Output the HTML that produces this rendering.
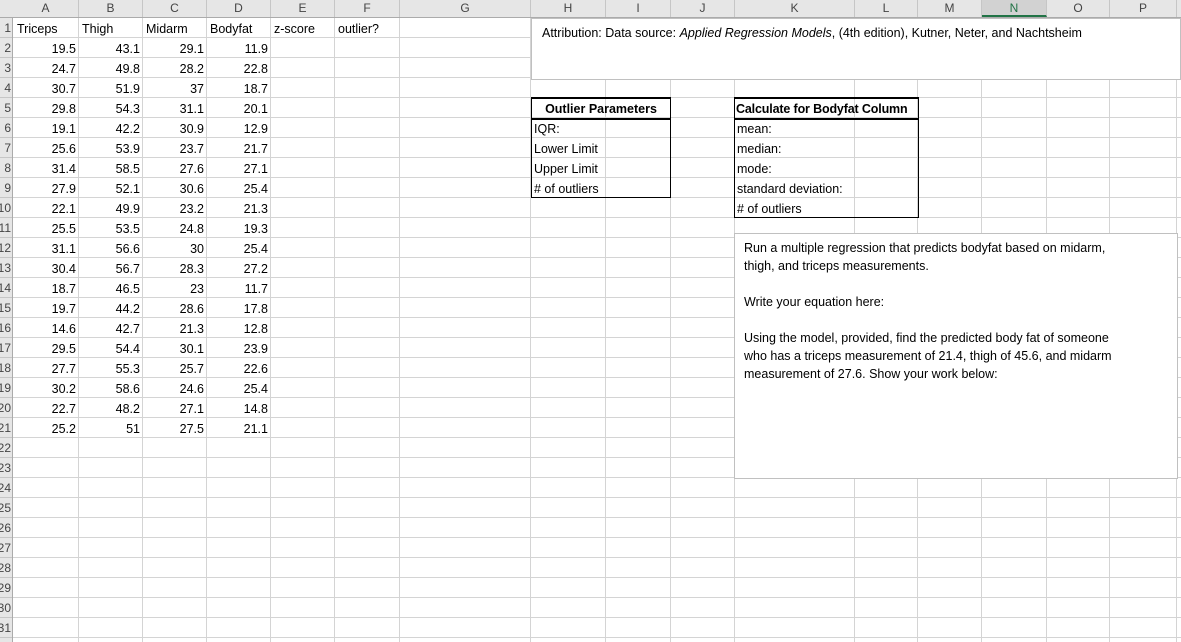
<!DOCTYPE html>
<html><head><meta charset="utf-8"><style>
*{margin:0;padding:0;box-sizing:border-box}
body{width:1181px;height:642px;overflow:hidden;background:#fff;font-family:"Liberation Sans",sans-serif;font-size:12.5px;color:#000;position:relative}
.grid{position:absolute;left:0;top:18px;width:1181px;height:624px;
background-image:repeating-linear-gradient(to bottom,transparent 0,transparent 19px,#d4d4d4 19px,#d4d4d4 20px);}
.v{position:absolute;top:0;width:1px;height:642px;background:#d4d4d4}
.hdr{position:absolute;left:0;top:0;width:1181px;height:18px;background:#e6e6e6;border-bottom:1px solid #ababab}
.hc{position:absolute;top:0;height:17px;line-height:17px;text-align:center;color:#444;font-size:12px;border-right:1px solid #c6c6c6}
.rn{position:absolute;left:0;top:18px;width:13px;height:624px;background:#e6e6e6;border-right:1px solid #ababab}
.rn div{height:20px;line-height:21px;font-size:12px;color:#444;text-align:right;padding-right:1px;border-bottom:1px solid #c6c6c6;overflow:hidden;white-space:nowrap;direction:rtl}
.row{position:absolute;left:13px;height:20px;line-height:20px;padding-top:1px;display:flex}
.row span{display:block;text-align:right;padding-right:3px;white-space:nowrap}
.row span:nth-child(1){width:66px}.row span:nth-child(2){width:64px}.row span:nth-child(3){width:64px}.row span:nth-child(4){width:64px}
.t{position:absolute;white-space:nowrap;line-height:20px;padding-top:1px}
.box{position:absolute;background:#fff;border:1px solid #c0c0c0}
</style></head><body>
<div class="grid"></div>
<div class="v" style="left:78px"></div><div class="v" style="left:142px"></div><div class="v" style="left:206px"></div><div class="v" style="left:270px"></div><div class="v" style="left:334px"></div><div class="v" style="left:399px"></div><div class="v" style="left:530px"></div><div class="v" style="left:605px"></div><div class="v" style="left:670px"></div><div class="v" style="left:734px"></div><div class="v" style="left:854px"></div><div class="v" style="left:917px"></div><div class="v" style="left:981px"></div><div class="v" style="left:1046px"></div><div class="v" style="left:1109px"></div><div class="v" style="left:1176px"></div>
<div class="hdr">
<div class="hc" style="left:13px;width:66px">A</div><div class="hc" style="left:79px;width:64px">B</div><div class="hc" style="left:143px;width:64px">C</div><div class="hc" style="left:207px;width:64px">D</div><div class="hc" style="left:271px;width:64px">E</div><div class="hc" style="left:335px;width:65px">F</div><div class="hc" style="left:400px;width:131px">G</div><div class="hc" style="left:531px;width:75px">H</div><div class="hc" style="left:606px;width:65px">I</div><div class="hc" style="left:671px;width:64px">J</div><div class="hc" style="left:735px;width:120px">K</div><div class="hc" style="left:855px;width:63px">L</div><div class="hc" style="left:918px;width:64px">M</div><div class="hc" style="left:982px;width:65px;background:#d2d2d2;color:#217346;border-bottom:2px solid #217346">N</div><div class="hc" style="left:1047px;width:63px">O</div><div class="hc" style="left:1110px;width:67px">P</div>
</div>
<div class="rn"><div>1</div><div>2</div><div>3</div><div>4</div><div>5</div><div>6</div><div>7</div><div>8</div><div>9</div><div>10</div><div>11</div><div>12</div><div>13</div><div>14</div><div>15</div><div>16</div><div>17</div><div>18</div><div>19</div><div>20</div><div>21</div><div>22</div><div>23</div><div>24</div><div>25</div><div>26</div><div>27</div><div>28</div><div>29</div><div>30</div><div>31</div></div>

<div class="t" style="left:17px;top:18px">Triceps</div><div class="t" style="left:82px;top:18px">Thigh</div><div class="t" style="left:146px;top:18px">Midarm</div><div class="t" style="left:210px;top:18px">Bodyfat</div><div class="t" style="left:274px;top:18px">z-score</div><div class="t" style="left:338px;top:18px">outlier?</div>

<div class="row" style="top:38px"><span>19.5</span><span>43.1</span><span>29.1</span><span>11.9</span></div>
<div class="row" style="top:58px"><span>24.7</span><span>49.8</span><span>28.2</span><span>22.8</span></div>
<div class="row" style="top:78px"><span>30.7</span><span>51.9</span><span>37</span><span>18.7</span></div>
<div class="row" style="top:98px"><span>29.8</span><span>54.3</span><span>31.1</span><span>20.1</span></div>
<div class="row" style="top:118px"><span>19.1</span><span>42.2</span><span>30.9</span><span>12.9</span></div>
<div class="row" style="top:138px"><span>25.6</span><span>53.9</span><span>23.7</span><span>21.7</span></div>
<div class="row" style="top:158px"><span>31.4</span><span>58.5</span><span>27.6</span><span>27.1</span></div>
<div class="row" style="top:178px"><span>27.9</span><span>52.1</span><span>30.6</span><span>25.4</span></div>
<div class="row" style="top:198px"><span>22.1</span><span>49.9</span><span>23.2</span><span>21.3</span></div>
<div class="row" style="top:218px"><span>25.5</span><span>53.5</span><span>24.8</span><span>19.3</span></div>
<div class="row" style="top:238px"><span>31.1</span><span>56.6</span><span>30</span><span>25.4</span></div>
<div class="row" style="top:258px"><span>30.4</span><span>56.7</span><span>28.3</span><span>27.2</span></div>
<div class="row" style="top:278px"><span>18.7</span><span>46.5</span><span>23</span><span>11.7</span></div>
<div class="row" style="top:298px"><span>19.7</span><span>44.2</span><span>28.6</span><span>17.8</span></div>
<div class="row" style="top:318px"><span>14.6</span><span>42.7</span><span>21.3</span><span>12.8</span></div>
<div class="row" style="top:338px"><span>29.5</span><span>54.4</span><span>30.1</span><span>23.9</span></div>
<div class="row" style="top:358px"><span>27.7</span><span>55.3</span><span>25.7</span><span>22.6</span></div>
<div class="row" style="top:378px"><span>30.2</span><span>58.6</span><span>24.6</span><span>25.4</span></div>
<div class="row" style="top:398px"><span>22.7</span><span>48.2</span><span>27.1</span><span>14.8</span></div>
<div class="row" style="top:418px"><span>25.2</span><span>51</span><span>27.5</span><span>21.1</span></div>

<div class="box" style="left:531px;top:18px;width:650px;height:62px"><div class="t" style="left:10px;top:3px">Attribution: Data source: <i>Applied Regression Models</i>, (4th edition), Kutner, Neter, and Nachtsheim</div></div>

<div style="position:absolute;left:531px;top:97px;width:140px;height:101px;border:1px solid #000;border-top:2px solid #000"></div>
<div style="position:absolute;left:531px;top:118px;width:140px;height:2px;background:#000"></div>
<div class="t" style="left:531px;top:98px;width:140px;text-align:center;font-weight:bold">Outlier Parameters</div>
<div class="t" style="left:534px;top:118px">IQR:</div><div class="t" style="left:534px;top:138px">Lower Limit</div><div class="t" style="left:534px;top:158px">Upper Limit</div><div class="t" style="left:534px;top:178px"># of outliers</div>

<div style="position:absolute;left:734px;top:97px;width:185px;height:121px;border:1px solid #000;border-top:2px solid #000"></div>
<div style="position:absolute;left:734px;top:118px;width:185px;height:2px;background:#000"></div>
<div class="t" style="left:736px;top:98px;font-weight:bold;letter-spacing:-0.15px">Calculate for Bodyfat Column</div>
<div class="t" style="left:737px;top:118px">mean:</div><div class="t" style="left:737px;top:138px">median:</div><div class="t" style="left:737px;top:158px">mode:</div><div class="t" style="left:737px;top:178px">standard deviation:</div><div class="t" style="left:737px;top:198px"># of outliers</div>

<div class="box" style="left:734px;top:233px;width:444px;height:246px">
<div style="position:absolute;left:9px;top:5px;line-height:18px;white-space:nowrap">Run a multiple regression that predicts bodyfat based on midarm,<br>thigh, and triceps measurements.<br><br>Write your equation here:<br><br>Using the model, provided, find the predicted body fat of someone<br>who has a triceps measurement of 21.4, thigh of 45.6, and midarm<br>measurement of 27.6. Show your work below:</div>
</div>
</body></html>
